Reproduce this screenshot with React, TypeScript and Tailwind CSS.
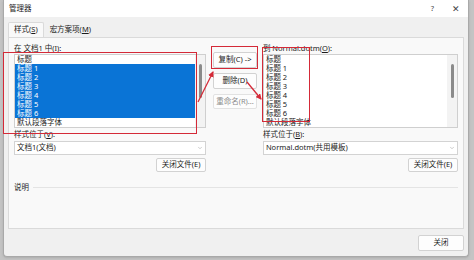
import { ChevronDown } from 'lucide-react'

const styles = ['标题', '标题 1', '标题 2', '标题 3', '标题 4', '标题 5', '标题 6', '默认段落字体']

function ListBox({ selected }: { selected: boolean }) {
  return (
    <div className="flex h-[74px] border border-[#cfcfcf] bg-white">
      <div className="flex flex-1 flex-col overflow-hidden pt-[0px]">
        {styles.map((s, i) => {
          const on = selected && i >= 1 && i <= 6
          return (
            <div
              key={s}
              className={`h-[9px] shrink-0 pl-[2px] leading-[9px] ${on ? 'bg-[#0a74d6] text-white' : 'text-[#1b1b1b]'}`}
            >
              {s}
            </div>
          )
        })}
      </div>
      <div className="flex w-[10px] justify-center bg-[#f3f3f3] pt-[9px]">
        <div className="h-[34px] w-[3px] rounded-full bg-[#8a8a8a]" />
      </div>
    </div>
  )
}

function Select({ value }: { value: string }) {
  return (
    <div className="flex h-[14px] items-center justify-between border border-[#d3d3d3] bg-white pl-[2px] pr-[2px]">
      <span>{value}</span>
      <ChevronDown size={6} className="text-[#9a9a9a]" />
    </div>
  )
}

function Btn({ label, className = '', disabled = false }: { label: string; className?: string; disabled?: boolean }) {
  return (
    <div
      className={`flex items-center justify-center rounded-[2px] border bg-[#fdfdfd] ${
        disabled ? 'border-[#e2e2e2] text-[#8c8c8c]' : 'border-[#d2d2d2] text-[#1b1b1b]'
      } ${className}`}
    >
      {label}
    </div>
  )
}

export default function App() {
  return (
    <div
      className="relative h-[260px] w-[474px] overflow-hidden bg-[#c4c4c4] text-[7.5px] text-[#1b1b1b]"
      style={{ fontFamily: '"Noto Sans", "Noto Sans CJK SC", sans-serif' }}
    >
      <div className="ml-[3px] flex h-[257px] w-[466px] flex-col rounded-b-[4px] border-x border-b border-[#a9a9a9] bg-[#f0f0f0] shadow">
        {/* title bar */}
        <div className="flex h-[17px] items-center justify-between bg-white pl-[5px] pr-[8px]">
          <span>管理器</span>
          <div className="flex items-center gap-[18px] text-[#444]">
            <span>?</span>
            <span className="text-[9px]">✕</span>
          </div>
        </div>

        <div className="flex flex-1 flex-col px-[4px]">
          {/* tabs */}
          <div className="flex h-[20px] items-end">
            <div className="flex h-[15px] items-center rounded-t-[2px] border-x border-t border-[#dadada] bg-[#f9f9f9] px-[5px]">
              样式(<span className="underline">S</span>)
            </div>
            <div className="flex h-[15px] items-center px-[6px]">
              宏方案项(<span className="underline">M</span>)
            </div>
          </div>

          {/* panel */}
          <div className="flex h-[192px] flex-col border border-[#dadada] bg-[#f9f9f9] pl-[5px] pr-[5px] pt-[4px]">
            <div className="flex">
              {/* left column */}
              <div className="flex w-[193px] flex-col">
                <div className="h-[12px] leading-[12px]">在 文档1 中(<span className="underline">I</span>):</div>
                <ListBox selected />
                <div className="h-[13px] leading-[13px]">样式位于(<span className="underline">V</span>):</div>
                <Select value="文档1(文档)" />
                <Btn label="关闭文件(E)" className="mt-[3px] h-[14px] w-[50px] self-end" />
              </div>

              {/* middle column */}
              <div className="ml-[7px] flex w-[44px] flex-col gap-[5px] pt-[10px]">
                <Btn label="复制(C) ->" className="h-[16px]" />
                <Btn label="删除(D)" className="h-[16px]" />
                <Btn label="重命名(R)..." className="h-[15px]" disabled />
              </div>

              {/* right column */}
              <div className="ml-[6px] flex w-[196px] flex-col">
                <div className="h-[12px] leading-[12px]">到 Normal.dotm(<span className="underline">O</span>):</div>
                <ListBox selected={false} />
                <div className="h-[13px] leading-[13px]">样式位于(<span className="underline">B</span>):</div>
                <Select value="Normal.dotm(共用模板)" />
                <Btn label="关闭文件(E)" className="mt-[3px] h-[14px] w-[50px] self-end" />
              </div>
            </div>

            <div className="mt-[10px] flex items-center gap-[4px]">
              <span>说明</span>
              <div className="h-px flex-1 bg-[#e4e4e4]" />
            </div>
          </div>

          {/* footer */}
          <div className="flex flex-1 items-center justify-end">
            <Btn label="关闭" className="h-[16px] w-[46px] border-[#8db6de]" />
          </div>
        </div>
      </div>

      {/* annotations */}
      <div className="absolute left-[3px] top-[52px] h-[82px] w-[194px] border-[1.5px] border-[#d42a38]" />
      <div className="absolute left-[211px] top-[46px] h-[23px] w-[47px] border-[1.5px] border-[#d42a38]" />
      <div className="absolute left-[262px] top-[47px] h-[75px] w-[48px] border-[1.5px] border-[#d42a38]" />
      <svg className="absolute left-0 top-0" width="474" height="260">
        <defs>
          <marker id="ah" markerWidth="6" markerHeight="6" refX="5" refY="3" orient="auto" markerUnits="userSpaceOnUse">
            <path d="M0,0 L6,3 L0,6 Z" fill="#d42a38" />
          </marker>
        </defs>
        <line x1="198" y1="102" x2="213" y2="72" stroke="#d42a38" strokeWidth="1.3" markerEnd="url(#ah)" />
        <line x1="247" y1="82" x2="261" y2="99" stroke="#d42a38" strokeWidth="1.3" markerEnd="url(#ah)" />
      </svg>
    </div>
  )
}
